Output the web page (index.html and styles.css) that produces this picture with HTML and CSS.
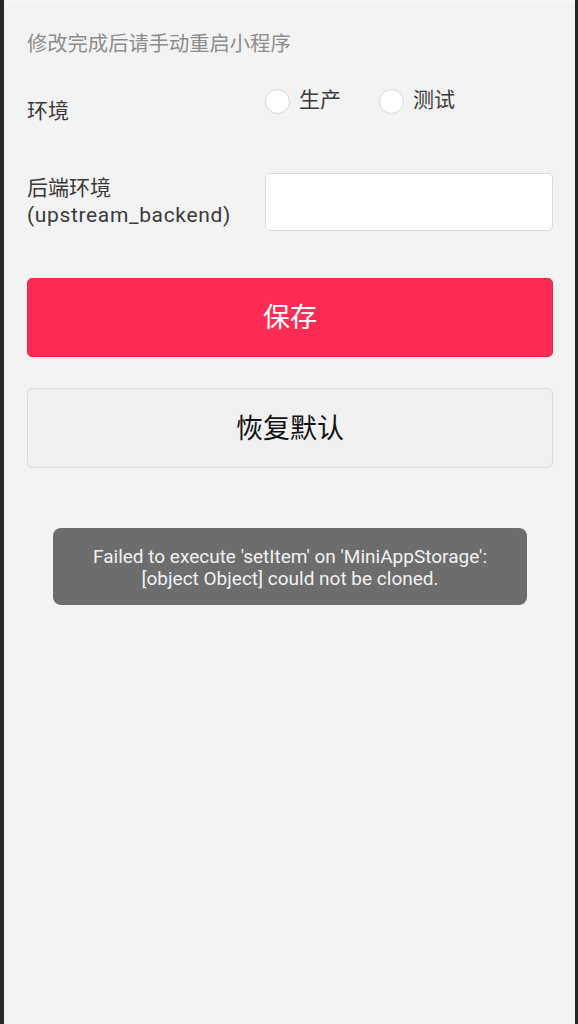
FILE: index.html
```html
<!DOCTYPE html>
<html lang="zh">
<head>
<meta charset="utf-8">
<title>设置</title>
<link rel="stylesheet" href="styles.css">
</head>
<body>
<div class="frame">
  <div class="page">
    <div class="hint">修改完成后请手动重启小程序</div>
    <div class="row row-env">
      <div class="label label-env">环境</div>
      <div class="radios">
        <label class="radio"><span class="circle"></span><span class="radio-text">生产</span></label>
        <label class="radio"><span class="circle"></span><span class="radio-text">测试</span></label>
      </div>
    </div>
    <div class="row row-backend">
      <div class="label label-backend">后端环境<br><span class="latin">(upstream_backend)</span></div>
      <div class="input"></div>
    </div>
    <div class="btn btn-primary"><span class="btn-text">保存</span></div>
    <div class="btn btn-default"><span class="btn-text">恢复默认</span></div>
  </div>
  <div class="toast">Failed to execute 'setItem' on 'MiniAppStorage':<br>[object Object] could not be cloned.</div>
</div>
</body>
</html>
```
FILE: styles.css
```css
html, body {
  margin: 0;
  padding: 0;
  background: #f3f3f3;
}
body {
  font-family: Roboto, "Noto Sans CJK SC", sans-serif;
}
.frame {
  position: relative;
  height: 1024px;
  box-sizing: border-box;
  border-left: 4px solid #262626;
  border-right: 3px solid #262626;
  background: #f3f3f3;
  overflow: hidden;
}
.frame::before {
  content: "";
  display: block;
  height: 4px;
  background: #f6f6f6;
}
.page {
  padding: 24px 22px 0 23px;
}
.hint {
  font-size: 20.3px;
  line-height: 32px;
  color: #8c8c8c;
}
.row {
  display: flex;
}
.row-env {
  margin-top: 24px;
}
.label {
  width: 238px;
  flex: none;
  font-size: 21px;
  color: #3a3a3a;
}
.latin {
  letter-spacing: 0.65px;
}
.label-env {
  line-height: 32px;
  padding-top: 11px;
}
.radios {
  display: flex;
  gap: 38px;
  height: 32px;
  align-items: center;
  padding-top: 1px;
}
.radio {
  display: flex;
  align-items: center;
  gap: 9px;
}
.circle {
  width: 23px;
  height: 23px;
  border-radius: 50%;
  border: 1.5px solid #d6d6da;
  background: #fff;
}
.radio-text {
  font-size: 21px;
  color: #3a3a3a;
  line-height: 32px;
  position: relative;
  top: -1px;
}
.row-backend {
  margin-top: 46px;
}
.label-backend {
  line-height: 27px;
  padding-top: 2px;
}
.input {
  flex: 1;
  height: 56px;
  background: #fff;
  border: 1px solid #dadada;
  border-radius: 5px;
}
.btn {
  box-sizing: border-box;
  display: flex;
  align-items: center;
  justify-content: center;
  font-size: 27px;
  border-radius: 5px;
}
.btn-text {
  position: relative;
  top: -2px;
}
.btn-primary {
  margin-top: 47px;
  height: 79px;
  background: #fe2c55;
  border: 1px solid #e8234b;
  color: #fff;
}
.btn-default {
  margin-top: 31px;
  height: 80px;
  background: #f1f1f1;
  border: 1px solid #dcdcdc;
  color: #111;
}
.toast {
  position: absolute;
  left: 49px;
  top: 528px;
  width: 474px;
  height: 77px;
  box-sizing: border-box;
  padding-top: 18px;
  background: #6d6d6d;
  border-radius: 8px;
  color: #f2f2f2;
  font-size: 19px;
  line-height: 22px;
  text-align: center;
}
```
